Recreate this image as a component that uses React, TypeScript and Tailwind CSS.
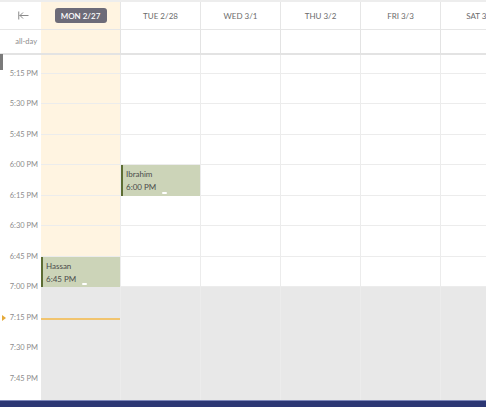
import React from "react";

const days = ["MON 2/27", "TUE 2/28", "WED 3/1", "THU 3/2", "FRI 3/3", "SAT 3/4"];
const labels = ["5:15 PM", "5:30 PM", "5:45 PM", "6:00 PM", "6:15 PM", "6:30 PM", "6:45 PM", "7:00 PM", "7:15 PM", "7:30 PM", "7:45 PM"];
const slotCount = 12;

function Event({ name, time }: { name: string; time: string }) {
  return (
    <div className="absolute left-0 right-0 top-0 bottom-[-1px] bg-[#ccd4b8] border-l-2 border-[#5c6d33] pl-[3px] pt-[3px] text-[8px] leading-[13px] text-[#4b4b4b] z-10">
      <div>{name}</div>
      <div>{time}</div>
      <div className="absolute bottom-[2px] left-1/2 w-[5px] h-[2px] bg-white rounded-sm" />
    </div>
  );
}

function DayColumn({ index }: { index: number }) {
  const isToday = index === 0;
  return (
    <div className="relative flex flex-col border-r border-[#ececec] last:border-r-0">
      {Array.from({ length: slotCount }).map((_, s) => {
        const gray = s >= 8;
        const h = s === 0 ? "h-[18.5px]" : "h-[30.5px]";
        const bg = gray ? "bg-[#e8e8e8]" : isToday ? "bg-[#fff4e1]" : "bg-white";
        const border = gray ? "" : "border-b border-[#ececec]";
        return (
          <div key={s} className={`relative shrink-0 ${h} ${bg} ${border}`}>
            {index === 1 && s === 4 && <Event name="Ibrahim" time="6:00 PM" />}
            {index === 0 && s === 7 && <Event name="Hassan" time="6:45 PM" />}
          </div>
        );
      })}
      {isToday && <div className="absolute left-0 right-0 top-[263px] h-[2px] bg-[#f1c46e] z-10" />}
    </div>
  );
}

export default function App() {
  return (
    <div
      className="w-[486px] h-[407px] overflow-hidden flex flex-col bg-white text-[#777]"
      style={{ fontFamily: "Lato, 'Open Sans', sans-serif" }}
    >
      <div className="h-[2px] shrink-0 bg-[#ededed]" />
      <div className="flex-1 overflow-hidden relative">
        <div className="grid grid-cols-[41px_repeat(6,80px)] w-[521px]">
          <div className="h-[28px] border-b border-[#e6e6e6] flex items-center justify-center">
            <svg width="11" height="9" viewBox="0 0 11 9" className="ml-[5px]">
              <path d="M0.75 0.5 V8.5 M1.5 4.5 H10.5 M5 1.5 L2 4.5 L5 7.5" stroke="#8a8a8a" strokeWidth="1" fill="none" />
            </svg>
          </div>
          {days.map((d, i) => (
            <div
              key={d}
              className={`h-[28px] border-b border-r border-[#e6e6e6] flex items-center justify-center text-[8px] ${i === 0 ? "bg-[#fff4e1]" : ""}`}
            >
              {i === 0 ? (
                <span className="bg-[#6d6b78] text-white rounded-[3px] w-[52px] h-[15px] flex items-center justify-center font-semibold">
                  {d}
                </span>
              ) : (
                <span className="text-[#6b6b6b]">{d}</span>
              )}
            </div>
          ))}
          <div className="h-[25px] border-b-2 border-[#e3e3e3] flex items-center justify-end pr-[4px] text-[7.5px] text-[#8c8c8c]">
            all-day
          </div>
          {days.map((d, i) => (
            <div key={d} className={`h-[25px] border-b-2 border-r border-[#e3e3e3] ${i === 0 ? "bg-[#fff4e1]" : ""}`} />
          ))}
          <div className="relative flex flex-col">
            <div className="h-[3px] shrink-0" />
            {labels.map((l) => (
              <div key={l} className="h-[30.5px] shrink-0 flex items-center justify-end pr-[3px] text-[7.5px] text-[#8c8c8c]">
                {l}
              </div>
            ))}
          </div>
          {days.map((d, i) => (
            <DayColumn key={d} index={i} />
          ))}
        </div>
        <div className="absolute left-0 top-[52px] w-[3px] h-[16px] bg-[#7a7a7a]" />
        <div className="absolute left-[2px] top-[313px] w-0 h-0 border-y-[3px] border-y-transparent border-l-[4px] border-l-[#e5a93a]" />
      </div>
      <div className="h-[7px] shrink-0 bg-[#2c3774] border-t border-[#7c86b8]" />
    </div>
  );
}
